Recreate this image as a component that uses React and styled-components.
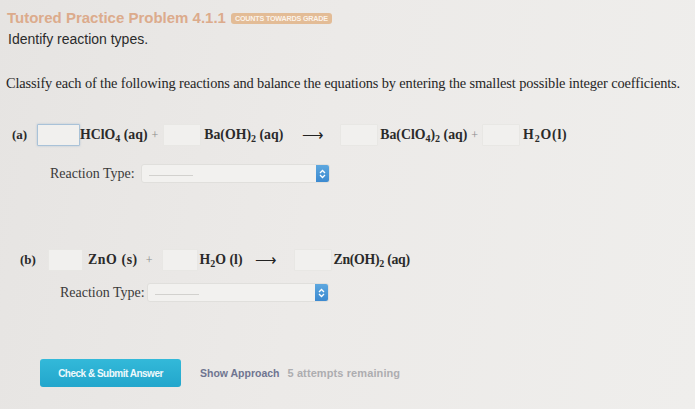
import styled, { createGlobalStyle } from "styled-components";

const GlobalStyle = createGlobalStyle`
  html, body {
    margin: 0;
    padding: 0;
  }
  body {
    width: 695px;
    height: 409px;
    overflow: hidden;
    background: linear-gradient(100deg, #e6e4e2 0%, #eceae8 45%, #efeeec 100%);
  }
`;

const Page = styled.div`
  display: flex;
  flex-direction: column;
  width: 695px;
  height: 409px;
  padding: 8px 0 0 0;
  box-sizing: border-box;
`;

const TitleRow = styled.div`
  display: flex;
  align-items: center;
  padding-left: 7px;
  height: 18px;
`;

const Title = styled.span`
  font-family: "Liberation Sans", Arial, sans-serif;
  font-size: 15px;
  font-weight: bold;
  color: #dcab8c;
`;

const Badge = styled.span`
  margin-left: 5px;
  background: #e3bc96;
  color: #fbf3ea;
  font-family: "Liberation Sans", Arial, sans-serif;
  font-weight: bold;
  font-size: 7.2px;
  line-height: 11px;
  padding: 0 4px;
  border-radius: 3px;
  letter-spacing: -0.2px;
  margin-top: 2px;
`;

const Subtitle = styled.div`
  font-family: "Liberation Sans", Arial, sans-serif;
  font-size: 14px;
  color: #2b2b2b;
  padding-left: 8px;
  margin-top: 5px;
`;

const Prompt = styled.div`
  font-family: "Liberation Serif", "Times New Roman", serif;
  font-size: 14.4px;
  color: #262626;
  padding-left: 6px;
  margin-top: 28px;
  letter-spacing: -0.13px;
`;

const Equation = styled.div`
  display: flex;
  align-items: center;
  height: 24px;
  padding-left: ${p => p.$indent}px;
  margin-top: ${p => p.$top}px;
  font-family: "Liberation Serif", "Times New Roman", serif;
  font-weight: bold;
  font-size: 13.8px;
  color: #2a2a2a;
`;

const PartLabel = styled.span`
  width: ${p => p.$width}px;
  font-size: 13px;
`;

const Blank = styled.span`
  display: inline-block;
  width: ${p => p.$width}px;
  height: 22px;
  box-sizing: border-box;
  margin-left: ${p => p.$gap || 0}px;
  background: #f1f0ee;
  border: 1px solid ${p => (p.$active ? "#a9c2d8" : "#e8e7e4")};
  box-shadow: ${p => (p.$active ? "0 0 2px rgba(120,160,200,0.5)" : "none")};
  border-radius: 1px;
`;

const Formula = styled.span`
  margin-left: ${p => p.$gap || 0}px;
  white-space: nowrap;
  letter-spacing: ${p => p.$spacing || 0}px;
  sub {
    font-size: 10px;
    vertical-align: -3px;
    line-height: 0;
  }
`;

const Plus = styled.span`
  margin-left: ${p => p.$gap || 4}px;
  font-weight: normal;
  color: #8a8a8a;
  font-size: 12px;
`;

const Arrow = styled.span`
  margin-left: ${p => p.$gap}px;
  font-weight: normal;
  font-size: 15px;
  color: #222;
`;

const TypeRow = styled.div`
  display: flex;
  align-items: center;
  padding-left: ${p => p.$indent}px;
  margin-top: ${p => p.$top}px;
`;

const TypeLabel = styled.span`
  font-family: "Liberation Serif", "Times New Roman", serif;
  font-size: 14px;
  color: #3a3a3a;
  width: ${p => p.$width}px;
`;

const Select = styled.div`
  display: flex;
  align-items: center;
  width: ${p => p.$width}px;
  height: 19px;
  box-sizing: border-box;
  background: #f2f1ef;
  border: 1px solid #e0dfdc;
  border-radius: 3px;
  overflow: hidden;
`;

const Placeholder = styled.span`
  margin-left: 7px;
  width: 44px;
  height: 1px;
  background: #d2d1ce;
  margin-top: 4px;
`;

const SelectButton = styled.span`
  margin-left: auto;
  width: 13px;
  height: 19px;
  background: linear-gradient(#5fa9e0, #3a88cf);
  display: flex;
  align-items: center;
  justify-content: center;
`;

const Footer = styled.div`
  display: flex;
  align-items: center;
  padding-left: 40px;
  margin-top: 57px;
  font-family: "Liberation Sans", Arial, sans-serif;
`;

const SubmitButton = styled.div`
  width: 141px;
  height: 28px;
  background: linear-gradient(#33b9d9, #22a6cc);
  border-radius: 3px;
  color: #eef9fc;
  font-weight: bold;
  font-size: 10px;
  letter-spacing: -0.5px;
  display: flex;
  align-items: center;
  justify-content: center;
`;

const Approach = styled.span`
  margin-left: 19px;
  font-size: 10.5px;
  font-weight: bold;
  color: #6f7590;
`;

const Attempts = styled.span`
  margin-left: 8px;
  font-size: 11px;
  font-weight: bold;
  color: #adadb0;
  letter-spacing: 0.1px;
`;

const Chevrons = () => (
  <svg width="7" height="10" viewBox="0 0 7 10">
    <path d="M1 4 L3.5 1.5 L6 4" fill="none" stroke="#fff" strokeWidth="1.3" />
    <path d="M1 6 L3.5 8.5 L6 6" fill="none" stroke="#fff" strokeWidth="1.3" />
  </svg>
);

const ReactionType = ({ indent, top, labelWidth, width }) => (
  <TypeRow $indent={indent} $top={top}>
    <TypeLabel $width={labelWidth}>Reaction Type:</TypeLabel>
    <Select $width={width}>
      <Placeholder />
      <SelectButton>
        <Chevrons />
      </SelectButton>
    </Select>
  </TypeRow>
);

const App = () => {
  return (
    <Page>
      <GlobalStyle />
      <TitleRow>
        <Title>Tutored Practice Problem 4.1.1</Title>
        <Badge>COUNTS TOWARDS GRADE</Badge>
      </TitleRow>
      <Subtitle>Identify reaction types.</Subtitle>
      <Prompt>
        Classify each of the following reactions and balance the equations by entering the smallest possible integer coefficients.
      </Prompt>

      <Equation $indent={12} $top={31}>
        <PartLabel $width={25}>(a)</PartLabel>
        <Blank $width={43} $active />
        <Formula>HClO<sub>4</sub> (aq)</Formula>
        <Plus>+</Plus>
        <Blank $width={38} $gap={5} />
        <Formula $gap={3}>Ba(OH)<sub>2</sub> (aq)</Formula>
        <Arrow $gap={19}>⟶</Arrow>
        <Blank $width={38} $gap={16} />
        <Formula $gap={2}>Ba(ClO<sub>4</sub>)<sub>2</sub> (aq)</Formula>
        <Plus>+</Plus>
        <Blank $width={38} $gap={4} />
        <Formula $gap={3} $spacing={0.8}>H<sub>2</sub>O(l)</Formula>
      </Equation>

      <ReactionType indent={50} top={17} labelWidth={91} width={189} />

      <Equation $indent={20} $top={65}>
        <PartLabel $width={28}>(b)</PartLabel>
        <Blank $width={35} />
        <Formula $gap={5} $spacing={0.6}>ZnO (s)</Formula>
        <Plus $gap={8}>+</Plus>
        <Blank $width={36} $gap={9} />
        <Formula $gap={2}>H<sub>2</sub>O (l)</Formula>
        <Arrow $gap={12}>⟶</Arrow>
        <Blank $width={38} $gap={17} />
        <Formula $gap={2} $spacing={-0.3}>Zn(OH)<sub>2</sub> (aq)</Formula>
      </Equation>

      <ReactionType indent={60} top={11} labelWidth={87} width={182} />

      <Footer>
        <SubmitButton>Check &amp; Submit Answer</SubmitButton>
        <Approach>Show Approach</Approach>
        <Attempts>5 attempts remaining</Attempts>
      </Footer>
    </Page>
  );
};

export default App;
